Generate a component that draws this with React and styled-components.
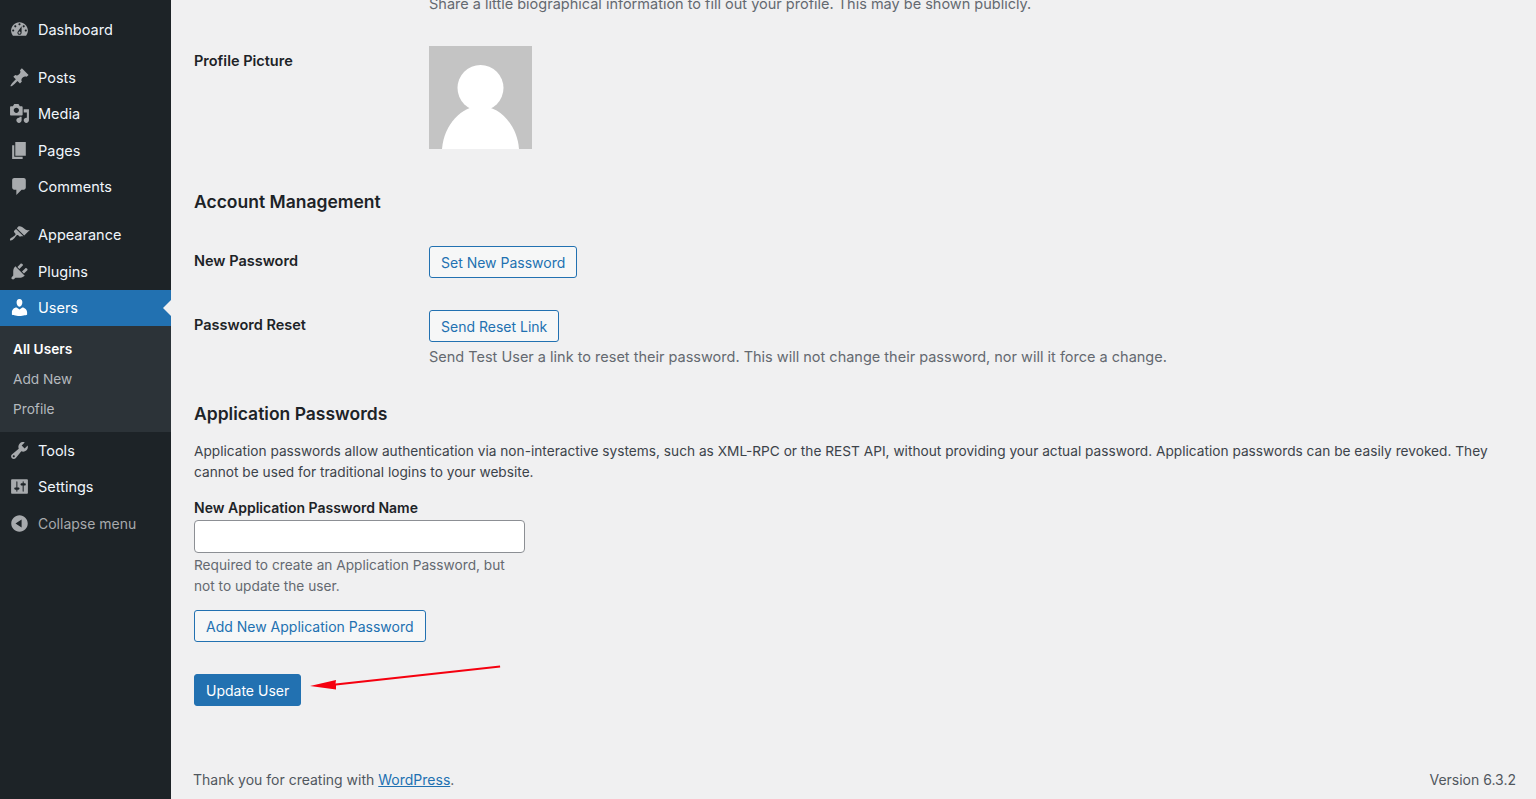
import React from "react";
import styled, { createGlobalStyle } from "styled-components";

const icons = {
	dashboard:
		"M3.76 16h12.48c1.1-1.37 1.76-3.11 1.76-5 0-4.42-3.58-8-8-8s-8 3.58-8 8c0 1.89.66 3.63 1.76 5zM10 4c.55 0 1 .45 1 1s-.45 1-1 1-1-.45-1-1 .45-1 1-1zM6 6c.55 0 1 .45 1 1s-.45 1-1 1-1-.45-1-1 .45-1 1-1zm8 0c.55 0 1 .45 1 1s-.45 1-1 1-1-.45-1-1 .45-1 1-1zm-5.37 5.55L12 7v6c0 1.1-.9 2-2 2s-2-.9-2-2c0-.57.24-1.08.63-1.45zM4 10c.55 0 1 .45 1 1s-.45 1-1 1-1-.45-1-1 .45-1 1-1zm12 0c.55 0 1 .45 1 1s-.45 1-1 1-1-.45-1-1 .45-1 1-1zm-5 3c0-.55-.45-1-1-1s-1 .45-1 1 .45 1 1 1 1-.45 1-1z",
	posts:
		"M10.44 3.02l1.82-1.82 6.36 6.35-1.83 1.82c-1.05-.68-2.48-.57-3.41.36l-.75.75c-.92.93-1.04 2.35-.35 3.41l-1.83 1.82-2.41-2.41-2.8 2.79c-.42.42-3.38 2.71-3.8 2.29s1.86-3.39 2.28-3.81l2.79-2.79L4.1 9.36l1.83-1.82c1.05.69 2.48.57 3.4-.36l.75-.75c.93-.92 1.05-2.35.36-3.41z",
	media:
		"M13 11V4c0-.55-.45-1-1-1h-1.67L9 1H5L3.67 3H2c-.55 0-1 .45-1 1v7c0 .55.45 1 1 1h10c.55 0 1-.45 1-1zM7 4.5c1.38 0 2.5 1.12 2.5 2.5S8.38 9.5 7 9.5 4.5 8.38 4.5 7 5.62 4.5 7 4.5zM14 6h5v10.5c0 1.38-1.12 2.5-2.5 2.5S14 17.88 14 16.5s1.12-2.5 2.5-2.5c.17 0 .34.02.5.05V9h-3V6zm-4 8.05V13h2v3.5c0 1.38-1.12 2.5-2.5 2.5S7 17.88 7 16.5 8.12 14 9.5 14c.17 0 .34.02.5.05z",
	pages: "M6 15V2h10v13H6zm-1 1h8v2H3V5h2v11z",
	comments:
		"M5 2h9c1.1 0 2 .9 2 2v7c0 1.1-.9 2-2 2h-2l-5 5v-5H5c-1.1 0-2-.9-2-2V4c0-1.1.9-2 2-2z",
	appearance:
		"M14.48 11.06L7.41 3.99l1.5-1.5c.5-.56 2.3-.47 3.51.32 1.21.8 1.43 1.28 2.91 2.1 1.18.64 2.45 1.26 4.45.85zm-.71.71L6.7 4.7 4.93 6.47c-.39.39-.39 1.02 0 1.41l1.06 1.06c.39.39.39 1.03 0 1.42-.6.6-1.43 1.11-2.21 1.69-.35.26-.7.53-1.01.84C1.43 13.23.4 14.91 1.1 15.6c.7.7 2.38-.33 3.72-1.68.31-.31.58-.66.84-1.01.58-.78 1.09-1.61 1.69-2.21.39-.39 1.02-.39 1.41 0l1.06 1.06c.39.39 1.02.39 1.41 0z",
	plugins:
		"M13.11 4.36L9.87 7.6 8 5.73l3.24-3.24c.35-.34 1.05-.2 1.56.32.52.51.66 1.21.31 1.55zm-8 1.77l.91-1.12 9.01 9.01-1.19.84c-.71.71-2.63 1.16-3.82 1.16H6.14L4.9 17.26c-.59.59-1.54.59-2.12 0-.59-.58-.59-1.53 0-2.12l1.24-1.24v-3.88c0-1.13.4-3.19 1.09-3.89zm7.26 3.97l3.24-3.24c.34-.35 1.04-.21 1.55.31.52.51.66 1.21.31 1.55l-3.24 3.25z",
	users:
		"M10 9.25c-2.27 0-2.73-3.44-2.73-3.44C7 4.02 7.82 2 9.97 2c2.16 0 2.98 2.02 2.71 3.81 0 0-.41 3.44-2.68 3.44zm0 2.57L12.72 10c2.39 0 4.52 2.33 4.52 4.53v2.49s-3.65 1.13-7.24 1.13c-3.65 0-7.24-1.13-7.24-1.13v-2.49c0-2.25 1.94-4.48 4.47-4.48z",
	tools:
		"M16.68 9.77c-1.34 1.34-3.3 1.67-4.95.99l-5.41 6.52c-.99.99-2.59.99-3.58 0s-.99-2.59 0-3.57l6.52-5.42c-.68-1.65-.35-3.61.99-4.95 1.28-1.28 3.12-1.62 4.72-1.06l-2.89 2.89 2.82 2.82 2.86-2.87c.53 1.58.18 3.39-1.08 4.65zM3.81 16.21c.4.39 1.04.39 1.43 0 .4-.4.4-1.04 0-1.43-.39-.4-1.03-.4-1.43 0-.39.39-.39 1.03 0 1.43z",
	settings:
		"M18 16V4c0-.55-.45-1-1-1H3c-.55 0-1 .45-1 1v12c0 .55.45 1 1 1h14c.55 0 1-.45 1-1zM8 11h1c.55 0 1 .45 1 1s-.45 1-1 1H8v1.5c0 .28-.22.5-.5.5s-.5-.22-.5-.5V13H6c-.55 0-1-.45-1-1s.45-1 1-1h1V5.5c0-.28.22-.5.5-.5s.5.22.5.5V11zm5-2h-1c-.55 0-1-.45-1-1s.45-1 1-1h1V5.5c0-.28.22-.5.5-.5s.5.22.5.5V7h1c.55 0 1 .45 1 1s-.45 1-1 1h-1v5.5c0 .28-.22.5-.5.5s-.5-.22-.5-.5V9z",
	collapse:
		"M10 2.16c4.33 0 7.84 3.51 7.84 7.84s-3.51 7.84-7.84 7.84S2.16 14.33 2.16 10 5.71 2.16 10 2.16zm2 11.72V6.12L6.18 9.97z",
};

const topGroup = [{ name: "Dashboard", icon: "dashboard" }];
const contentGroup = [
	{ name: "Posts", icon: "posts" },
	{ name: "Media", icon: "media" },
	{ name: "Pages", icon: "pages" },
	{ name: "Comments", icon: "comments" },
];
const adminGroup = [
	{ name: "Appearance", icon: "appearance" },
	{ name: "Plugins", icon: "plugins" },
];
const bottomGroup = [
	{ name: "Tools", icon: "tools" },
	{ name: "Settings", icon: "settings" },
];

function MenuIcon({ name }) {
	return (
		<IconSvg viewBox="0 0 20 20">
			<path d={icons[name]} />
		</IconSvg>
	);
}

function MenuItem({ item }) {
	return (
		<MenuRow>
			<MenuIcon name={item.icon} />
			{item.name}
		</MenuRow>
	);
}

export default function App() {
	return (
		<>
			<GlobalStyle />
			<Page>
				<Sidebar>
					<MenuGroup>
						{topGroup.map((item) => (
							<MenuItem key={item.name} item={item} />
						))}
					</MenuGroup>
					<MenuGroup>
						{contentGroup.map((item) => (
							<MenuItem key={item.name} item={item} />
						))}
					</MenuGroup>
					<MenuGroup>
						{adminGroup.map((item) => (
							<MenuItem key={item.name} item={item} />
						))}
						<ActiveRow>
							<MenuIcon name="users" />
							Users
						</ActiveRow>
						<SubMenu>
							<SubItem $current>All Users</SubItem>
							<SubItem>Add New</SubItem>
							<SubItem>Profile</SubItem>
						</SubMenu>
						{bottomGroup.map((item) => (
							<MenuItem key={item.name} item={item} />
						))}
						<CollapseRow>
							<MenuIcon name="collapse" />
							Collapse menu
						</CollapseRow>
					</MenuGroup>
				</Sidebar>
				<Main>
					<Content>
						<ClippedDescription>
							Share a little biographical information to fill out your profile.
							This may be shown publicly.
						</ClippedDescription>
						<PictureRow>
							<RowLabel>Profile Picture</RowLabel>
							<Avatar viewBox="0 0 103 103">
								<rect width="103" height="103" fill="#c4c4c4" />
								<circle cx="51.5" cy="42" r="23" fill="#fff" />
								<path
									d="M13 103C15 78 33 60 51.5 60S88 78 90 103Z"
									fill="#fff"
								/>
							</Avatar>
						</PictureRow>
						<SectionTitle>Account Management</SectionTitle>
						<PasswordRow>
							<RowLabel>New Password</RowLabel>
							<div>
								<OutlineButton>Set New Password</OutlineButton>
							</div>
						</PasswordRow>
						<ResetRow>
							<RowLabel>Password Reset</RowLabel>
							<div>
								<OutlineButton>Send Reset Link</OutlineButton>
								<HelpText>
									Send Test User a link to reset their password. This will not
									change their password, nor will it force a change.
								</HelpText>
							</div>
						</ResetRow>
						<AppTitle>Application Passwords</AppTitle>
						<Paragraph>
							Application passwords allow authentication via non-interactive
							systems, such as XML-RPC or the REST API, without providing your
							actual password. Application passwords can be easily revoked. They
							cannot be used for traditional logins to your website.
						</Paragraph>
						<FieldLabel>New Application Password Name</FieldLabel>
						<TextInput />
						<FieldHelp>
							Required to create an Application Password, but not to update the
							user.
						</FieldHelp>
						<AddButton>Add New Application Password</AddButton>
						<PrimaryButton>Update User</PrimaryButton>
					</Content>
					<Footer>
						<span>
							Thank you for creating with <FooterLink>WordPress</FooterLink>.
						</span>
						<Version>Version 6.3.2</Version>
					</Footer>
					<Arrow viewBox="0 0 200 36">
						<path
							d="M5 26 31 20 30.5 23.6 195 5.6 195.2 7.6 31 25.6 31 29.5Z"
							fill="#f5000f"
						/>
					</Arrow>
				</Main>
			</Page>
		</>
	);
}

const GlobalStyle = createGlobalStyle`
	* {
		box-sizing: border-box;
	}
	html, body {
		margin: 0;
		padding: 0;
		height: 100%;
		overflow: hidden;
	}
	body {
		font-family: "Inter", "Liberation Sans", sans-serif;
		background: #f0f0f1;
		color: #1d2327;
	}
`;

const Page = styled.div`
	display: flex;
	height: 799px;
	overflow: hidden;
`;

const Sidebar = styled.nav`
	flex: 0 0 171px;
	display: flex;
	flex-direction: column;
	gap: 11.5px;
	padding-top: 11px;
	background: #1d2327;
`;

const MenuGroup = styled.div`
	display: flex;
	flex-direction: column;
`;

const MenuRow = styled.div`
	display: flex;
	align-items: center;
	gap: 8px;
	height: 36.5px;
	padding-left: 9px;
	font-size: 14.5px;
	color: #f0f6fc;
`;

const ActiveRow = styled(MenuRow)`
	position: relative;
	background: #2271b1;
	color: #fff;

	svg {
		fill: #fff;
	}

	&::after {
		content: "";
		position: absolute;
		right: 0;
		top: 50%;
		margin-top: -8px;
		border: 8px solid transparent;
		border-right-color: #f0f0f1;
		border-left-width: 0;
	}
`;

const CollapseRow = styled(MenuRow)`
	color: #a7aaad;
	font-size: 14px;
`;

const IconSvg = styled.svg`
	flex: 0 0 21px;
	width: 21px;
	height: 21px;
	fill: #a7aaad;
`;

const SubMenu = styled.div`
	display: flex;
	flex-direction: column;
	justify-content: center;
	height: 106px;
	background: #2c3338;
`;

const SubItem = styled.div`
	display: flex;
	align-items: center;
	height: 30px;
	padding-left: 13px;
	font-size: 13.7px;
	font-weight: ${(props) => (props.$current ? 600 : 400)};
	color: ${(props) => (props.$current ? "#fff" : "#b4b9be")};
`;

const Main = styled.main`
	position: relative;
	flex: 1;
	display: flex;
	flex-direction: column;
	justify-content: space-between;
	padding: 0 20px 0 22px;
	min-width: 0;
`;

const Content = styled.div`
	display: flex;
	flex-direction: column;
	align-items: flex-start;
	padding-left: 1px;
`;

const FormRow = styled.div`
	display: grid;
	grid-template-columns: 235px 1fr;
	width: 100%;
`;

const ClippedDescription = styled.p`
	margin: -7px 0 0 235px;
	font-size: 14.5px;
	line-height: 22px;
	color: #646970;
`;

const PictureRow = styled(FormRow)`
	margin-top: 31px;
	height: 103px;
`;

const RowLabel = styled.div`
	padding-top: 6px;
	font-size: 14.5px;
	line-height: 18px;
	font-weight: 600;
`;

const Avatar = styled.svg`
	display: block;
	width: 103px;
	height: 103px;
`;

const SectionTitle = styled.h2`
	margin: 41px 0 0;
	font-size: 17.5px;
	line-height: 24px;
	font-weight: 600;
`;

const AppTitle = styled(SectionTitle)`
	margin-top: 34px;
`;

const PasswordRow = styled(FormRow)`
	margin-top: 32px;
`;

const ResetRow = styled(FormRow)`
	margin-top: 32px;

	${RowLabel} {
		padding-top: 6px;
	}
`;

const OutlineButton = styled.button`
	display: inline-block;
	height: 32px;
	padding: 0 11px;
	border: 1px solid #2271b1;
	border-radius: 3px;
	background: #f6f7f7;
	color: #2271b1;
	font-family: inherit;
	font-size: 14px;
`;

const HelpText = styled.p`
	margin: 4px 0 0;
	font-size: 14.5px;
	line-height: 22px;
	color: #646970;
`;

const Paragraph = styled.p`
	margin: 15px 0 0;
	font-size: 13.7px;
	line-height: 21px;
	color: #3c434a;
`;

const FieldLabel = styled.label`
	margin-top: 15px;
	font-size: 14px;
	line-height: 20px;
	font-weight: 600;
`;

const TextInput = styled.input`
	width: 331px;
	height: 33px;
	margin-top: 2px;
	border: 1px solid #8c8f94;
	border-radius: 4px;
	background: #fff;
`;

const FieldHelp = styled.p`
	width: 331px;
	margin: 2px 0 0;
	font-size: 13.7px;
	line-height: 21px;
	color: #646970;
`;

const AddButton = styled(OutlineButton)`
	margin-top: 13px;
`;

const PrimaryButton = styled.button`
	height: 32px;
	margin-top: 32px;
	padding: 0 11px;
	border: 1px solid #2271b1;
	border-radius: 3px;
	background: #2271b1;
	color: #fff;
	font-family: inherit;
	font-size: 14px;
`;

const Footer = styled.footer`
	display: flex;
	justify-content: space-between;
	align-items: center;
	height: 40px;
	font-size: 14px;
	color: #50575e;
`;

const FooterLink = styled.a`
	color: #2271b1;
	text-decoration: underline;
`;

const Version = styled.span`
	color: #50575e;
`;

const Arrow = styled.svg`
	position: absolute;
	left: 134px;
	top: 660px;
	width: 200px;
	height: 36px;
`;
